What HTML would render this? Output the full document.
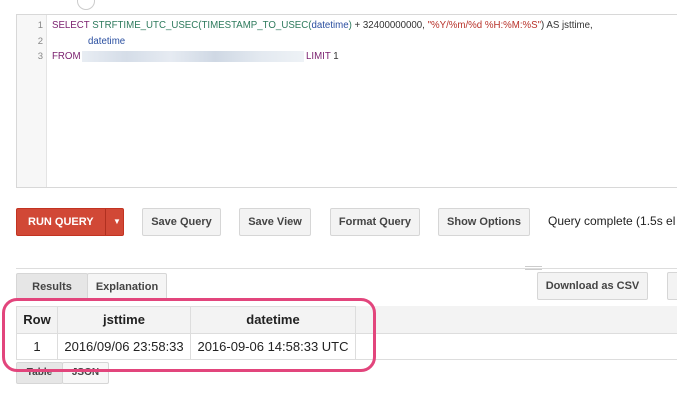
<!DOCTYPE html><html><head><style>
body{margin:0;width:677px;height:408px;background:#fff;position:relative;overflow:hidden;font-family:"Liberation Sans",Arial,sans-serif}
.a{position:absolute}
.ed{left:16px;top:14px;width:670px;height:174px;border:1px solid #d8d8d8;box-sizing:border-box}
.gut{left:17px;top:15px;width:29px;height:172px;background:#f7f7f7;border-right:1px solid #e4e4e4}
.ln{font-size:9.5px;color:#888;width:26px;text-align:right;left:17px}
.code{font-size:9.7px;left:52px;white-space:pre;color:#333}
.btn{top:208px;height:28px;border:1px solid #d6d6d6;background:#f3f3f3;border-radius:2px;box-sizing:border-box;font-size:11px;font-weight:bold;color:#444;text-align:center;line-height:26px}
.c{box-sizing:border-box;border:1px solid #ddd;font-size:13px;text-align:center;color:#222}
</style></head><body>
<div class="a" style="left:77px;top:-8px;width:16px;height:16px;border:1px solid #ccc;border-radius:50%"></div>
<div class="a ed"></div><div class="a gut"></div>
<div class="a ln" style="top:20px">1</div><div class="a ln" style="top:36px">2</div><div class="a ln" style="top:51px">3</div>
<div class="a code" style="top:20px"><span style="color:#7a1f6e">SELECT</span> <span style="color:#2d7a5c">STRFTIME_UTC_USEC(TIMESTAMP_TO_USEC(</span><span style="color:#2a4fa0">datetime</span><span style="color:#2d7a5c">)</span> + 32400000000, <span style="color:#b8322a">"%Y/%m/%d %H:%M:%S"</span>) AS jsttime,</div>
<div class="a code" style="top:36px;left:88px;color:#2a4fa0">datetime</div>
<div class="a code" style="top:51px"><span style="color:#7a1f6e">FROM</span> [</div>
<div class="a" style="left:82px;top:51px;width:222px;height:11px;background:linear-gradient(90deg,#e8edf3,#d5dde8 20%,#e6ebf2 40%,#cfd8e4 60%,#e3e9f0 80%,#eef2f6)"></div>
<div class="a code" style="top:51px;left:306px;color:#7a1f6e">LIMIT <span style="color:#333">1</span></div>
<div class="a btn" style="left:16px;width:108px;background:#d14836;border-color:#c23321;color:#fff;text-align:left;padding-left:11px">RUN QUERY<span style="position:absolute;left:88px;top:0;width:1px;height:26px;background:#b03020"></span><span style="position:absolute;left:96px;top:0;font-size:8px">▼</span></div>
<div class="a btn" style="left:142px;width:79px">Save Query</div>
<div class="a btn" style="left:239px;width:72px">Save View</div>
<div class="a btn" style="left:330px;width:90px">Format Query</div>
<div class="a btn" style="left:438px;width:92px">Show Options</div>
<div class="a" style="left:548px;top:214px;font-size:12px;color:#222;white-space:nowrap">Query complete (1.5s el</div>
<div class="a" style="left:16px;top:268px;width:661px;height:1px;background:#ddd"></div>
<div class="a" style="left:525px;top:266px;width:17px;height:1px;background:#ccc;box-shadow:0 3px 0 #ccc"></div>
<div class="a btn" style="top:273px;left:16px;width:72px;background:#e6e6e6;height:27px">Results</div>
<div class="a btn" style="top:273px;left:87px;width:80px;height:27px;background:#f5f5f5">Explanation</div>
<div class="a btn" style="top:272px;left:537px;width:111px">Download as CSV</div>
<div class="a btn" style="top:272px;left:667px;width:30px"></div>
<div class="a" style="left:16px;top:306px;width:661px;height:1px;background:#ddd"></div>
<div class="a" style="left:355px;top:306px;width:322px;height:27px;background:#f3f3f3;border-bottom:1px solid #ddd"></div>
<div class="a c" style="left:16px;top:306px;width:42px;height:28px;line-height:26px;font-weight:bold;background:#f3f3f3">Row</div>
<div class="a c" style="left:57px;top:306px;width:134px;height:28px;line-height:26px;font-weight:bold;background:#f3f3f3">jsttime</div>
<div class="a c" style="left:190px;top:306px;width:166px;height:28px;line-height:26px;font-weight:bold;background:#f3f3f3">datetime</div>
<div class="a c" style="left:16px;top:333px;width:42px;height:27px;line-height:25px">1</div>
<div class="a c" style="left:57px;top:333px;width:134px;height:27px;line-height:25px">2016/09/06 23:58:33</div>
<div class="a c" style="left:190px;top:333px;width:166px;height:27px;line-height:25px">2016-09-06 14:58:33 UTC</div>
<div class="a" style="left:355px;top:359px;width:322px;height:1px;background:#ddd"></div>
<div class="a btn" style="top:362px;left:16px;width:47px;height:22px;line-height:20px;font-size:10px;background:#e6e6e6">Table</div>
<div class="a btn" style="top:362px;left:62px;width:47px;height:22px;line-height:20px;font-size:10px;background:#f7f7f7">JSON</div>
<div class="a" style="left:2px;top:298px;width:374px;height:74px;border:3px solid #e2457c;border-radius:15px;box-sizing:border-box"></div>
</body></html>
